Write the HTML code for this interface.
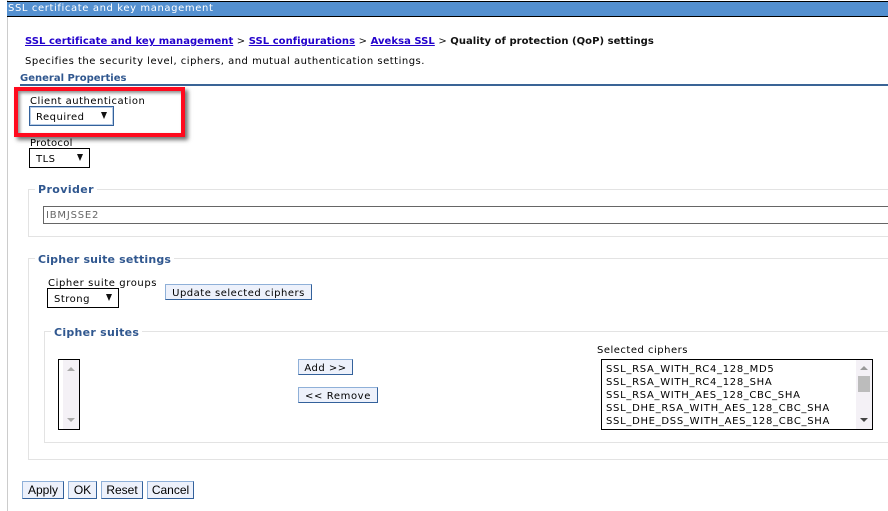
<!DOCTYPE html>
<html><head><meta charset="utf-8">
<style>
html,body{margin:0;padding:0;background:#fff;}
body{width:888px;height:511px;overflow:hidden;position:relative;font-family:"DejaVu Sans","Liberation Sans",sans-serif;font-size:10px;color:#000;}
.a{position:absolute;white-space:nowrap;line-height:12px;}
.box{position:absolute;box-sizing:border-box;}
.h{font-weight:bold;color:#30578f;}
.fs{position:absolute;box-sizing:border-box;border:1px solid #e3e3e3;border-right:none;}
.leg{position:absolute;background:#fff;padding:0 3px;font-weight:bold;color:#30578f;font-size:11px;line-height:14px;white-space:nowrap;}
.sel{position:absolute;box-sizing:border-box;border:1px solid #000;background:#fff;height:20px;line-height:22px;padding-left:6px;}
.sel i{position:absolute;right:6px;top:5px;width:0;height:0;border-left:3.5px solid transparent;border-right:3.5px solid transparent;border-top:7px solid #111;}
.btn{position:absolute;box-sizing:border-box;background:#edf1fb;border:1px solid;border-color:#8fb0d8 #33619b #33619b #8fb0d8;height:16px;line-height:17px;text-align:center;white-space:nowrap;letter-spacing:.5px;}
.b2{font-family:"Liberation Sans",sans-serif;font-size:12px;height:18px;line-height:16px;letter-spacing:0;}
a{color:#2200cc;font-weight:bold;text-decoration:underline;}
.tri{position:absolute;width:0;height:0;border-left:4px solid transparent;border-right:4px solid transparent;}
</style></head><body>
<div class="box" style="left:7px;top:0;width:1px;height:511px;background:#ccc;"></div>
<div class="box" style="left:7px;top:1px;width:881px;height:16px;background:#5490d0;border-top:1px solid #000;border-bottom:1px solid #000;"></div>
<div class="a" style="left:8px;top:3px;color:#fff;letter-spacing:.61px;">SSL certificate and key management</div>

<div class="a" style="left:25px;top:36px;font-weight:bold;color:#111;letter-spacing:.04px;"><a>SSL certificate and key management</a> <span style="font-weight:normal">&gt;</span> <a>SSL configurations</a> <span style="font-weight:normal">&gt;</span> <a>Aveksa SSL</a> <span style="font-weight:normal">&gt;</span> Quality of protection (QoP) settings</div>
<div class="a" style="left:25px;top:56px;letter-spacing:.5px;">Specifies the security level, ciphers, and mutual authentication settings.</div>
<div class="a h" style="left:20px;top:73px;">General Properties</div>
<div class="box" style="left:20px;top:84px;width:868px;height:2px;background:#3a6496;"></div>

<div class="box" style="left:14px;top:87px;width:171px;height:50px;border:4px solid #ff0a1e;box-shadow:3px 3px 4px rgba(0,0,0,.55),inset 2px 2px 3px rgba(0,0,0,.45);"></div>
<div class="a" style="left:30px;top:96px;letter-spacing:.5px;">Client authentication</div>
<div class="sel" style="left:29px;top:106px;width:85px;border:1px solid #33619b;box-shadow:0 0 0 1px #b9cde6 inset;letter-spacing:.5px;">Required<i></i></div>

<div class="a" style="left:30px;top:138px;letter-spacing:.3px;">Protocol</div>
<div class="sel" style="left:29px;top:148px;width:61px;letter-spacing:.5px;line-height:21px;">TLS<i></i></div>

<div class="fs" style="left:28px;top:189px;width:860px;height:48px;"></div>
<div class="leg" style="left:35px;top:183px;letter-spacing:.4px;">Provider</div>
<div class="box" style="left:43px;top:206px;width:845px;height:18px;border:1px solid #666;border-right:none;"></div>
<div class="a" style="left:46px;top:210px;color:#666;letter-spacing:.8px;">IBMJSSE2</div>

<div class="fs" style="left:28px;top:258px;width:860px;height:202px;"></div>
<div class="leg" style="left:35px;top:253px;letter-spacing:.17px;">Cipher suite settings</div>
<div class="a" style="left:48px;top:278px;letter-spacing:.6px;">Cipher suite groups</div>
<div class="sel" style="left:47px;top:288px;width:72px;letter-spacing:.5px;">Strong<i></i></div>
<div class="btn" style="left:165px;top:284px;width:147px;line-height:18px;">Update selected ciphers</div>

<div class="fs" style="left:44px;top:331px;width:844px;height:112px;"></div>
<div class="leg" style="left:51px;top:326px;letter-spacing:.27px;">Cipher suites</div>

<div class="box" style="left:58px;top:359px;width:22px;height:71px;border:1px solid #000;background:#fff;"></div>
<div class="box" style="left:63px;top:360px;width:16px;height:69px;background:#f4f1f6;"></div>
<div class="tri" style="left:67px;top:367px;border-bottom:4px solid #aaa;"></div>
<div class="tri" style="left:67px;top:418px;border-top:4px solid #aaa;"></div>

<div class="btn" style="left:298px;top:359px;width:55px;line-height:17px;">Add &gt;&gt;</div>
<div class="btn" style="left:298px;top:387px;width:80px;line-height:18px;letter-spacing:.6px;">&lt;&lt; Remove</div>

<div class="a" style="left:597px;top:345px;letter-spacing:.5px;">Selected ciphers</div>
<div class="box" style="left:601px;top:359px;width:272px;height:71px;border:1px solid #000;background:#fff;"></div>
<div class="box" style="left:856px;top:360px;width:16px;height:69px;background:#f4f1f6;"></div>
<div class="box" style="left:858px;top:376px;width:12px;height:16px;background:#bcbcbc;"></div>
<div class="tri" style="left:860px;top:366px;border-bottom:4px solid #999;"></div>
<div class="tri" style="left:860px;top:418px;border-top:4px solid #444;"></div>
<div class="a" style="left:606px;top:363px;letter-spacing:.7px;line-height:13px;">SSL_RSA_WITH_RC4_128_MD5<br>SSL_RSA_WITH_RC4_128_SHA<br>SSL_RSA_WITH_AES_128_CBC_SHA<br>SSL_DHE_RSA_WITH_AES_128_CBC_SHA<br>SSL_DHE_DSS_WITH_AES_128_CBC_SHA</div>

<div class="btn b2" style="left:22px;top:481px;width:42px;">Apply</div>
<div class="btn b2" style="left:68px;top:481px;width:29px;">OK</div>
<div class="btn b2" style="left:101px;top:481px;width:42px;">Reset</div>
<div class="btn b2" style="left:147px;top:481px;width:47px;">Cancel</div>
</body></html>
